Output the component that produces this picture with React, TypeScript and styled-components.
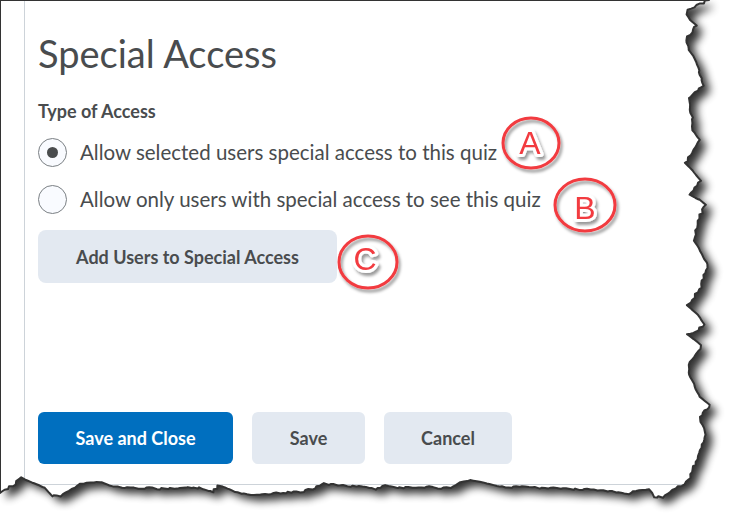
import styled, { createGlobalStyle } from "styled-components";

const GlobalStyle = createGlobalStyle`
  * { box-sizing: border-box; }
  body {
    margin: 0;
    background: #fff;
    font-family: Lato, "Noto Sans", sans-serif;
  }
`;

// rough outline of the torn paper edge (right side, then bottom)
const EDGE: [number, number][] = [
  [709, 0], [700, 4], [688, 10], [686, 14], [690, 20], [696, 25], [692, 32],
  [686, 40], [688, 48], [694, 58], [696, 62], [700, 75], [704, 86], [697, 90],
  [690, 96], [690, 110], [693, 120], [692, 130], [700, 140], [694, 150],
  [685, 163], [692, 170], [700, 180], [695, 188], [690, 195], [700, 200],
  [706, 205], [700, 215], [697, 228], [693, 240], [700, 250], [708, 265],
  [703, 278], [700, 290], [690, 302], [688, 306], [698, 315], [705, 325],
  [698, 330], [688, 335], [695, 340], [702, 346], [695, 353], [690, 362],
  [688, 372], [692, 380], [697, 392], [700, 397], [710, 405], [702, 412],
  [700, 420], [704, 428], [705, 440], [700, 450], [696, 462], [692, 472],
  [689, 480], [682, 486],
  [672, 489], [662, 497], [654, 497], [650, 490], [640, 491], [625, 494],
  [610, 491], [600, 490], [570, 489], [545, 488], [520, 487], [505, 487],
  [490, 484], [480, 482], [470, 480], [460, 482], [450, 487], [440, 488],
  [430, 487], [415, 487], [400, 488], [385, 485], [375, 489], [366, 487],
  [350, 486], [340, 485], [325, 484], [315, 488], [300, 492], [280, 493],
  [262, 494], [248, 495], [235, 492], [222, 486], [218, 486], [213, 492],
  [200, 488], [185, 487], [165, 489], [150, 488], [125, 488], [110, 486],
  [100, 482], [90, 482], [80, 484], [68, 490], [60, 496], [52, 496],
  [45, 488], [35, 484], [28, 481], [22, 478], [15, 484], [5, 490], [0, 493],
];

const buildEdge = () => {
  let seed = 7;
  const rnd = () => {
    seed = (seed * 16807) % 2147483647;
    return seed / 2147483647 - 0.5;
  };
  const pts: string[] = [];
  for (let i = 0; i < EDGE.length - 1; i++) {
    const [x1, y1] = EDGE[i];
    const [x2, y2] = EDGE[i + 1];
    const steps = Math.max(1, Math.round(Math.hypot(x2 - x1, y2 - y1) / 3));
    for (let s = 0; s < steps; s++) {
      const t = s / steps;
      const j = i === 0 && s === 0 ? 0 : rnd() * 2.2;
      pts.push(`${(x1 + (x2 - x1) * t + j).toFixed(1)},${(y1 + (y2 - y1) * t + j * 0.8).toFixed(1)}`);
    }
  }
  pts.push(`${EDGE[EDGE.length - 1][0]},${EDGE[EDGE.length - 1][1]}`);
  return pts.join(" L");
};

const paper = `M0,0 L${buildEdge()} Z`;

const TornEdge = () => (
  <EdgeSvg width="732" height="521" viewBox="0 0 732 521">
    <defs>
      <clipPath id="outside">
        <path clipRule="evenodd" d={`M-20,-20 H760 V540 H-20 Z ${paper}`} />
      </clipPath>
      <filter id="soft" x="-5%" y="-5%" width="110%" height="110%">
        <feGaussianBlur stdDeviation="4" />
      </filter>
    </defs>
    <g clipPath="url(#outside)">
      <rect x="-20" y="-20" width="780" height="570" fill="#fff" />
      <path d={paper} fill="#000" opacity="0.8" filter="url(#soft)" transform="translate(7,6)" />
    </g>
    <path d={paper} fill="none" stroke="#333" strokeWidth="2" strokeLinejoin="round" />
  </EdgeSvg>
);

type CalloutProps = {
  cx: number;
  cy: number;
  rx: number;
  ry: number;
  letter: string;
  lx?: number;
  ly?: number;
};

const Callout = ({ cx, cy, rx, ry, letter, lx = 0, ly = 0 }: CalloutProps) => (
  <CalloutSvg
    width={rx * 2 + 20}
    height={ry * 2 + 20}
    style={{ left: cx - rx - 10, top: cy - ry - 10 }}
  >
    <defs>
      <filter id={`sh${letter}`} x="-30%" y="-30%" width="160%" height="160%">
        <feDropShadow dx="2" dy="3" stdDeviation="1.8" floodColor="#000" floodOpacity="0.4" />
      </filter>
    </defs>
    <ellipse
      cx={rx + 10}
      cy={ry + 10}
      rx={rx}
      ry={ry}
      fill="none"
      stroke="#f23b3f"
      strokeWidth="3"
      filter={`url(#sh${letter})`}
    />
    <text
      x={rx + 10 + lx}
      y={ry + 10 + ly}
      dy="11.5"
      textAnchor="middle"
      fontFamily="'Liberation Sans', Arial, sans-serif"
      fontSize="32"
      fill="#f23b3f"
      stroke="#fff"
      strokeWidth="6"
      strokeLinejoin="round"
      paintOrder="stroke"
      filter={`url(#sh${letter})`}
    >
      {letter}
    </text>
  </CalloutSvg>
);

const App = () => (
  <>
    <GlobalStyle />
    <Frame>
      <Page>
        <Panel>
          <Title>Special Access</Title>
          <Legend>Type of Access</Legend>
          <RadioList>
            <RadioRow>
              <Radio checked />
              <RadioLabel>Allow selected users special access to this quiz</RadioLabel>
            </RadioRow>
            <RadioRow>
              <Radio />
              <RadioLabel>Allow only users with special access to see this quiz</RadioLabel>
            </RadioRow>
          </RadioList>
          <AddButton>Add Users to Special Access</AddButton>
          <Footer>
            <Button $primary $w={195}>Save and Close</Button>
            <Button $w={113}>Save</Button>
            <Button $w={128}>Cancel</Button>
          </Footer>
        </Panel>
      </Page>
      <Callout cx={531} cy={143} rx={28} ry={25} letter="A" lx={-1} ly={-1} />
      <Callout cx={585} cy={205} rx={30} ry={26} letter="B" ly={2} />
      <Callout cx={368} cy={262} rx={29} ry={26} letter="C" lx={-3} ly={-4} />
      <TornEdge />
    </Frame>
  </>
);

export default App;

const Frame = styled.div`
  position: relative;
  width: 732px;
  height: 521px;
  overflow: hidden;
  background: #fff;
`;

const Page = styled.div`
  padding-left: 24px;
  height: 485px;
`;

const Panel = styled.div`
  display: flex;
  flex-direction: column;
  height: 100%;
  padding: 31px 13px 20px;
  border-left: 1px solid #cdd3d9;
  border-bottom: 1px solid #cdd3d9;
  color: #494c4e;
`;

const Title = styled.h1`
  margin: 0;
  font-size: 38px;
  font-weight: 400;
  line-height: 1.2;
`;

const Legend = styled.div`
  margin-top: 24px;
  font-size: 18px;
  font-weight: 700;
  line-height: 1.2;
`;

const RadioList = styled.div`
  display: flex;
  flex-direction: column;
  gap: 18px;
  margin-top: 16px;
`;

const RadioRow = styled.label`
  display: flex;
  align-items: center;
  gap: 13px;
`;

const Radio = styled.span<{ checked?: boolean }>`
  position: relative;
  flex: none;
  width: 29px;
  height: 29px;
  border: 1px solid #7b8084;
  border-radius: 50%;
  background: #f9fbff;

  &::after {
    content: "";
    display: ${({ checked }) => (checked ? "block" : "none")};
    position: absolute;
    left: 8px;
    top: 8px;
    width: 11px;
    height: 11px;
    border-radius: 50%;
    background: #494c4e;
  }
`;

const RadioLabel = styled.span`
  font-size: 20.5px;
  line-height: 1.2;
`;

const AddButton = styled.button`
  margin-top: 16px;
  width: 299px;
  height: 53px;
  border: none;
  border-radius: 8px;
  background: #e3e9f1;
  color: #494c4e;
  font-family: Lato, sans-serif;
  font-size: 18px;
  font-weight: 700;
`;

const Footer = styled.div`
  display: flex;
  gap: 19px;
  margin-top: auto;
`;

const Button = styled.button<{ $primary?: boolean; $w: number }>`
  width: ${({ $w }) => $w}px;
  height: 52px;
  border: none;
  border-radius: 6px;
  background: ${({ $primary }) => ($primary ? "#006fbf" : "#e3e9f1")};
  color: ${({ $primary }) => ($primary ? "#fff" : "#494c4e")};
  font-family: Lato, sans-serif;
  font-size: 18px;
  font-weight: 700;
`;

const CalloutSvg = styled.svg`
  position: absolute;
  overflow: visible;
`;

const EdgeSvg = styled.svg`
  position: absolute;
  inset: 0;
  pointer-events: none;
`;
